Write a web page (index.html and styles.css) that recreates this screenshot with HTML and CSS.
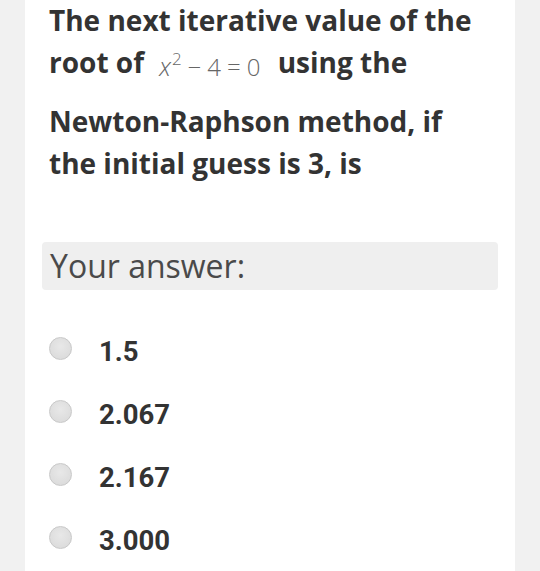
FILE: index.html
```html
<!DOCTYPE html>
<html>
<head>
<meta charset="utf-8">
<link rel="stylesheet" href="styles.css">
</head>
<body>
<div class="page">
  <div class="card">
    <div class="question">
      <div class="qline">The next iterative value of the</div>
      <div class="qline qmath">root of <span class="math"><span class="mi">x</span><sup>2</sup><span class="mo">−</span>4<span class="mo">=</span>0</span> using the</div>
      <div class="qline">Newton-Raphson method, if</div>
      <div class="qline">the initial guess is 3, is</div>
    </div>
    <div class="answer">Your answer:</div>
    <ul class="options">
      <li class="option"><span class="radio"></span><span class="label">1.5</span></li>
      <li class="option"><span class="radio"></span><span class="label">2.067</span></li>
      <li class="option"><span class="radio"></span><span class="label">2.167</span></li>
      <li class="option"><span class="radio"></span><span class="label">3.000</span></li>
    </ul>
  </div>
</div>
</body>
</html>
```
FILE: styles.css
```css
html, body {
  margin: 0;
  padding: 0;
  background: #f1f1f1;
  height: 100%;
}
.page {
  padding: 0 25px;
  height: 571px;
  overflow: hidden;
}
.card {
  background: #fff;
  height: 100%;
  padding: 0 17px;
  box-sizing: border-box;
}
.question {
  padding: 0 7px;
  font-family: "Open Sans", sans-serif;
  font-weight: 700;
  font-size: 28px;
  color: #333;
}
.qline {
  height: 42px;
  line-height: 40px;
  white-space: nowrap;
}
.qmath {
  height: 59px;
}
.math {
  font-family: "Open Sans", sans-serif;
  font-weight: 300;
  font-size: 24px;
  color: #666;
  margin: 0 10px 0 8px;
  position: relative;
  top: 3px;
}
.mi {
  font-style: italic;
  font-size: 25px;
}
.mo {
  margin: 0 6px;
}
.math sup {
  font-size: 17px;
  vertical-align: 11px;
  line-height: 0;
  margin-left: 1px;
}
.answer {
  margin-top: 57px;
  background: #efefef;
  border-radius: 4px;
  height: 48px;
  line-height: 48px;
  padding: 0 8px;
  font-family: "Open Sans", sans-serif;
  font-size: 32px;
  color: #4a4a4a;
}
.options {
  list-style: none;
  margin: 0;
  padding: 0;
  margin-top: 30px;
}
.option {
  display: flex;
  align-items: center;
  height: 63px;
}
.radio {
  width: 21px;
  height: 21px;
  border-radius: 50%;
  background: radial-gradient(circle at 50% 40%, #e8e8e8, #d8d8d8);
  border: 1px solid #c8c8c8;
  margin-left: 7px;
  margin-top: -6px;
}
.label {
  margin-left: 27px;
  font-family: Roboto, sans-serif;
  font-weight: 700;
  font-size: 27.5px;
  color: #333;
}
```
